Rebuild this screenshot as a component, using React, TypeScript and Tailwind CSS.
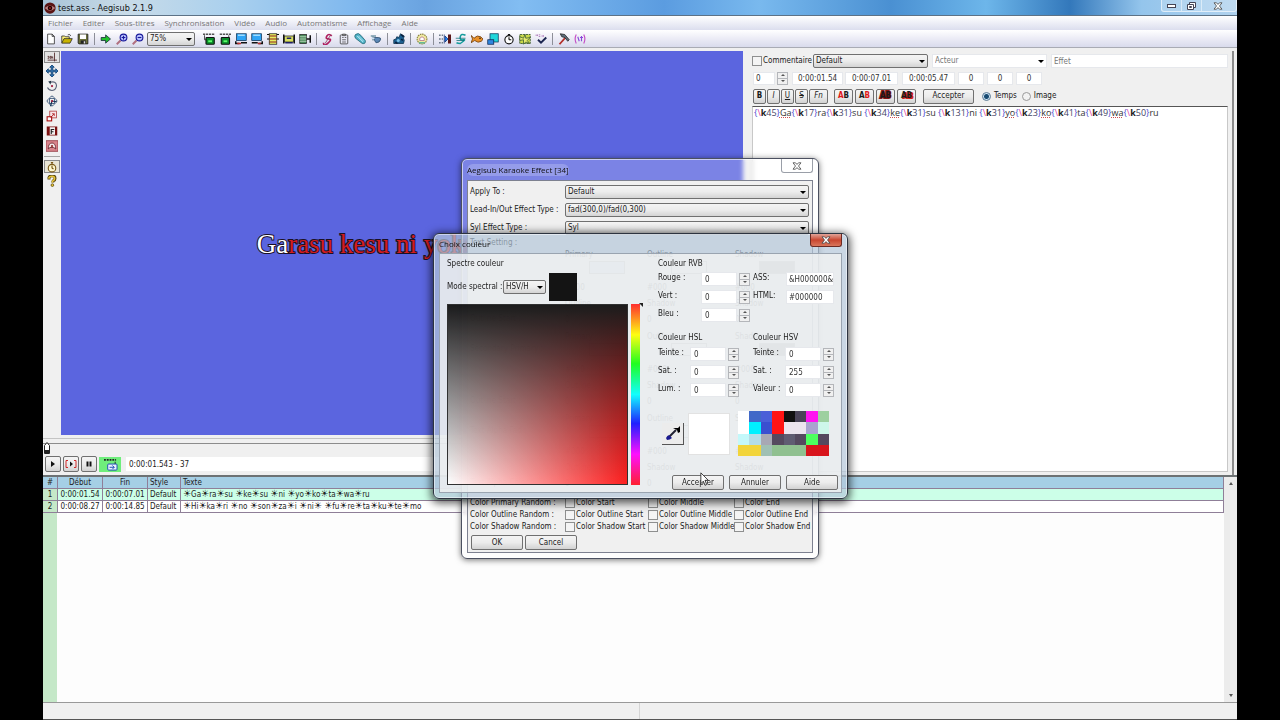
import { ReactNode } from "react";

const ui = "font-['DejaVu_Sans_Condensed','Liberation_Sans',sans-serif]";

// 16x16 toolbar drawings
const glyphs: Record<string, ReactNode> = {
  new: <path d="M3.500 1.500h6l3 3v10h-9zM9.500 1.500v3h3" fill="#fff" stroke="#222" />,
  open: (
    <>
      <path d="M1 13V4h4l1 1h5v3" fill="#fff27a" stroke="#222" />
      <path d="M1 13.500 4 7.500h11l-3 6z" fill="#c9b400" stroke="#222" />
      <path d="M9 2.500q3-2 4 1.500" fill="none" stroke="#222" />
    </>
  ),
  save: (
    <>
      <path d="M1.500 1.500h13v13h-12l-1-1z" fill="#6b6f3a" stroke="#111" />
      <path d="M4 2h8v6H4z" fill="#fff" />
      <path d="M5 10h7v4H5z" fill="#222" />
      <path d="M9 11h2v3H9z" fill="#ddd" />
    </>
  ),
  jump: <path d="M1.500 6h6V2.500L14 8l-6.500 5.500V10h-6z" fill="#1fc02a" stroke="#123" />,
  zoomIn: (
    <>
      <path d="M1 15 6 10" stroke="#b07080" strokeWidth="2.500" />
      <circle cx="10" cy="6" r="4.500" fill="#b9c2ff" stroke="#1a1a9a" strokeWidth="1.500" />
      <path d="M7.500 6h5M10 3.500v5" stroke="#1a1a9a" strokeWidth="1.500" />
    </>
  ),
  zoomOut: (
    <>
      <path d="M1 15 6 10" stroke="#b07080" strokeWidth="2.500" />
      <circle cx="10" cy="6" r="4.500" fill="#b9c2ff" stroke="#1a1a9a" strokeWidth="1.500" />
      <path d="M7.500 6h5" stroke="#1a1a9a" strokeWidth="1.500" />
    </>
  ),
  subStart: (
    <>
      <path d="M0 1.500h15" stroke="#555" strokeWidth="2" strokeDasharray="3 1" />
      <path d="M2 3v6h3" fill="none" stroke="#222" />
      <rect x="4" y="6" width="11" height="9" rx="1" fill="#0a8a2a" stroke="#111" strokeWidth="1.500" />
      <path d="M7 11h5" stroke="#5cff6a" strokeWidth="2.500" />
    </>
  ),
  subEnd: (
    <>
      <path d="M1 1.500h15" stroke="#555" strokeWidth="2" strokeDasharray="3 1" />
      <path d="M13 3v4" stroke="#222" />
      <rect x="3" y="6" width="11" height="9" rx="1" fill="#0a8a2a" stroke="#111" strokeWidth="1.500" />
      <path d="M6 11h5" stroke="#5cff6a" strokeWidth="2.500" />
    </>
  ),
  videoStart: (
    <>
      <rect x="2" y="1" width="13" height="9" fill="#2fa4f5" stroke="#135" />
      <path d="M4 3h9" stroke="#9fdcff" strokeWidth="2" />
      <path d="M1 11v3h5M8 13h8" fill="none" stroke="#111" strokeWidth="2" />
      <path d="M3 14h5" stroke="#c03030" strokeWidth="2" />
    </>
  ),
  videoEnd: (
    <>
      <rect x="1" y="1" width="13" height="9" fill="#2fa4f5" stroke="#135" />
      <path d="M3 3h9" stroke="#9fdcff" strokeWidth="2" />
      <path d="M1 13h8M15 11v3h-5" fill="none" stroke="#111" strokeWidth="2" />
      <path d="M9 14h4" stroke="#c03030" strokeWidth="2" />
    </>
  ),
  snap: (
    <>
      <path d="M0 2h16M0 8h16" stroke="#111" strokeWidth="1.500" />
      <rect x="3" y="1" width="10" height="14" fill="#e8ef60" stroke="#222" />
      <path d="M3 4h10M3 8h10M3 12h10" stroke="#8a2020" strokeWidth="1.500" />
    </>
  ),
  scene: (
    <>
      <path d="M1 2v12M15 2v12" stroke="#111" strokeWidth="2" />
      <rect x="2" y="4" width="12" height="8" fill="#d8e060" stroke="#222" />
      <path d="M3 13h10M5 7h6" stroke="#226" strokeWidth="2" />
    </>
  ),
  shift: (
    <>
      <rect x="1" y="2" width="9" height="12" fill="#4a8a5a" stroke="#222" />
      <path d="M1 5h9M1 8h9M1 11h9" stroke="#d0e8d0" />
      <path d="M15 3v10M15 8h-5" stroke="#111" strokeWidth="2" />
    </>
  ),
  styles: (
    <>
      <path d="M13 4Q9 0 6.500 4T9 8t-1 5.500-6-.5" fill="none" stroke="#b02060" strokeWidth="2.200" />
      <path d="M12 2 4 14" stroke="#803050" />
    </>
  ),
  props: (
    <>
      <rect x="3" y="2.500" width="10" height="12" rx="1" fill="#e8e8f4" stroke="#333" />
      <path d="M6 1.500h4v2H6zM5.500 6h2M9 6h2M5.500 9h5M5.500 12h5" fill="none" stroke="#444" />
    </>
  ),
  attach: (
    <>
      <path d="M2 2q4-3 7 1l6 7q1 5-4 4L2 7q-2-3 0-5z" fill="#53b3c8" stroke="#18606f" />
      <path d="M4 4l8 8M6 4l7 7" stroke="#bdeefa" />
    </>
  ),
  fonts: (
    <>
      <path d="M1 4h7M4 4v6" stroke="#79a" strokeWidth="2" />
      <path d="M5 6h6q4 0 3 3-1 4-6 4-2-2-3-7z" fill="#5b87b5" stroke="#246" />
      <path d="M2 7h4" stroke="#cde" strokeWidth="2" />
    </>
  ),
  auto: (
    <>
      <path d="M1 14V9l3-1 1-3 3 1 2-5 3 2 2 1-1 3 1 3-1 4z" fill="#1c5f8f" stroke="#082c48" />
      <circle cx="7" cy="10" r="2" fill="#7cc4ea" />
      <path d="M11 2l3 3M3 12l3 2M11 8l2 2" stroke="#0a1c3a" strokeWidth="2" />
    </>
  ),
  assdraw: (
    <>
      <circle cx="8" cy="8" r="6.500" fill="#efe9a0" stroke="#8d8440" strokeDasharray="2 1" strokeWidth="1.500" />
      <path d="M5 10h6V7L8 5 5 7z" fill="#fff" stroke="#b06a8a" />
      <path d="M4 13h8" stroke="#6b9" strokeWidth="2" />
    </>
  ),
  timing: (
    <>
      <path d="M0 3h6M0 8h6M0 13h6" stroke="#456" strokeDasharray="1 1" strokeWidth="2" />
      <path d="M7 2v12M8 4l4 4-4 4z" fill="#28f" stroke="#137" />
      <rect x="12" y="2" width="4" height="12" fill="#5a1818" />
    </>
  ),
  kanji: (
    <>
      <path d="M14 3Q8 0 7 5t4 4-4 5q-3 0-5-1" fill="none" stroke="#159c9c" strokeWidth="2" />
      <path d="M1 7h13M2 10h10" stroke="#0c6d74" />
    </>
  ),
  fish: (
    <>
      <path d="M0 3l4 4q4-5 9-2l3 3-2 3q-5 3-9-1l-5 3 2-5z" fill="#e8902a" stroke="#6b3a08" />
      <circle cx="12" cy="7" r="1" fill="#111" />
    </>
  ),
  resample: (
    <>
      <rect x="4" y="1" width="11" height="11" fill="#1fd6da" stroke="#0b3a5a" />
      <rect x="1" y="9" width="8" height="6" fill="#2f86e0" stroke="#0b2550" />
    </>
  ),
  clock: (
    <>
      <circle cx="8" cy="9" r="5.500" fill="#fff" stroke="#111" strokeWidth="1.500" />
      <path d="M8 9V5.500M8 9h3M6.500 2h3" stroke="#111" strokeWidth="1.500" />
    </>
  ),
  karaoke: (
    <>
      <path d="M1 2h14v12H1z" fill="#c9d94a" stroke="#242" strokeDasharray="3 1" />
      <path d="M1 5l5 2 2-5 1 5 6-1-4 4 3 4-5-2-3 3V9L1 10z" fill="#e8ec70" stroke="#353" />
    </>
  ),
  spell: (
    <>
      <path d="M1 3h3M6 2v4M9 4h3" stroke="#a05fae" strokeWidth="2" strokeDasharray="1 1" />
      <path d="M4 9l4 4 7-7" fill="none" stroke="#1b2550" strokeWidth="2.500" />
    </>
  ),
  options: (
    <>
      <path d="M2 15 10 6" stroke="#b3302a" strokeWidth="2.500" />
      <path d="M3 1l6 1 6 7-2 2-4-5-4-1z" fill="#5e6f7a" stroke="#222" />
    </>
  ),
  tagHide: (
    <>
      <path d="M3 2Q0 8 3 14M13 2q3 6 0 12" fill="none" stroke="#c44ac4" strokeWidth="1.500" />
      <path d="M5 5l2 6M10 4v7M8 6h4" stroke="#8a4ad8" strokeWidth="1.500" />
    </>
  ),
  // visual typesetting tools
  standard: <path d="M1 7h2v3H1M5 7h2v3H5zM9 7v3h1M1 13h15M12 1v14" fill="none" stroke="#4a2020" strokeWidth="1.300" />,
  drag: (
    <path
      d="M8 0l3 3H9v4h4V5l3 3-3 3V9H9v4h2l-3 3-3-3h2V9H3v2L0 8l3-3v2h4V3H5z"
      fill="#2d72b0"
      stroke="#174a7a"
      strokeWidth="1.200"
    />
  ),
  rotateZ: (
    <>
      <path d="M6 3q7-2 8 4 0 6-6 7-4 0-6-4" fill="none" stroke="#5b6478" strokeWidth="1.500" />
      <path d="M3 2l4-1-1 5z" fill="#234" />
      <circle cx="8" cy="8" r="1.500" fill="#a02040" />
    </>
  ),
  rotateXY: (
    <>
      <ellipse cx="8" cy="8" rx="6.500" ry="3.500" fill="none" stroke="#4a6484" strokeWidth="1.300" />
      <ellipse cx="8" cy="8" rx="3.500" ry="6.500" fill="none" stroke="#4a6484" strokeWidth="1.300" />
      <path d="M8 8l6 1M8 8l-2 7" stroke="#135" strokeWidth="1.500" />
      <circle cx="8" cy="8" r="1.500" fill="#a02040" />
    </>
  ),
  scale: (
    <>
      <rect x="5" y="1.500" width="9" height="9" fill="#f7e3e6" stroke="#a33" />
      <rect x="1.500" y="9" width="6" height="5.500" fill="#fff" stroke="#a11" strokeWidth="1.500" />
      <path d="M6 10l5-5M8 5h3v3" fill="none" stroke="#a11" />
    </>
  ),
  clip: (
    <>
      <rect x="1" y="2" width="14" height="12" fill="#7a1010" />
      <rect x="5" y="3" width="7" height="10" fill="#f2f2f2" />
      <path d="M7 12V6h4M7 9h3" fill="none" stroke="#222" strokeWidth="1.500" />
    </>
  ),
  vectorClip: (
    <>
      <rect x="0" y="1" width="16" height="14" fill="#d8848c" stroke="#8a2a34" />
      <path d="M3 12q0-8 5-8t5 8q-3-3-5-2-3-1-5 2z" fill="#f3e6e8" stroke="#5c1a22" />
      <circle cx="8" cy="8" r="1.500" fill="#933" />
    </>
  ),
  realtime: (
    <>
      <circle cx="8" cy="9.500" r="5" fill="#fdf8d0" stroke="#7a5a18" strokeWidth="1.500" />
      <path d="M8 9.500V6M8 9.500l2 1M6.500 2h3M8 2v2" stroke="#7a5a18" strokeWidth="1.500" />
    </>
  ),
  help: (
    <>
      <path d="M4 6V3.500Q5 1 8 1q4 0 4 3.500 0 2-2 3-1 .8-1 2.500" fill="none" stroke="#5a4a10" strokeWidth="4" />
      <path d="M4 5V3.500Q5 1.500 8 1.500q3.500 0 3.500 3 0 2-2 3-1 .8-1 2.500" fill="none" stroke="#e8c53a" strokeWidth="2" />
      <circle cx="8.500" cy="13.500" r="1.800" fill="#e8c53a" stroke="#5a4a10" />
    </>
  ),
};

function Glyph({ name, className = "size-3" }: { name: string; className?: string }) {
  return (
    <svg viewBox="0 0 16 16" className={className} fill="none" aria-hidden="true">
      {glyphs[name]}
    </svg>
  );
}

function ToolButton({ name }: { name: string }) {
  return (
    <button aria-label={name} className="flex h-4 w-4 items-center justify-center">
      <Glyph name={name} />
    </button>
  );
}

function Separator() {
  return <span className="mx-[3px] h-3 w-px bg-[#8d8f98]" />;
}

const btn =
  "flex items-center justify-center rounded-[2px] border border-[#707070] bg-gradient-to-b from-[#f4f4f4] via-[#ececec] to-[#d2d2d2]";
const field = "min-w-0 border border-[#e6e8ec] bg-white text-[#333] outline-none";

function Drop({ label, options, className = "", plain = false }: {
  label: string;
  options: string[];
  className?: string;
  plain?: boolean;
}) {
  return (
    <span className={`relative flex h-[14px] ${className}`}>
      <select
        aria-label={label}
        className={`w-full appearance-none pl-[2px] outline-none ${
          plain
            ? "border border-[#e6e8ec] bg-white text-[#777]"
            : "rounded-[2px] border border-[#707070] bg-gradient-to-b from-[#f4f4f4] via-[#ececec] to-[#d4d4d4]"
        }`}
      >
        {options.map((o) => (
          <option key={o}>{o}</option>
        ))}
      </select>
      <svg viewBox="0 0 6 3" className="pointer-events-none absolute right-[3px] top-[6px] h-[3px] w-[6px]">
        <path d="M0 0h6L3 3z" fill="#000" />
      </svg>
    </span>
  );
}

function Spinner({ label }: { label: string }) {
  return (
    <span className="flex h-[13px] w-[11px] flex-col">
      <button aria-label={`${label} +`} className="flex flex-1 items-center justify-center border border-[#b4b6ba] bg-[#f0f0f0]">
        <svg viewBox="0 0 4 2" className="h-[2px] w-1"><path d="M0 2h4L2 0z" fill="#555" /></svg>
      </button>
      <button aria-label={`${label} -`} className="flex flex-1 items-center justify-center border border-t-0 border-[#b4b6ba] bg-[#f0f0f0]">
        <svg viewBox="0 0 4 2" className="h-[2px] w-1"><path d="M0 0h4L2 2z" fill="#555" /></svg>
      </button>
    </span>
  );
}

function Check({ label }: { label: string }) {
  return (
    <label className="flex items-center gap-px whitespace-nowrap">
      <input type="checkbox" className="size-[10px] shrink-0 appearance-none border border-[#8e8f8f] bg-[#f4f4f4]" />
      {label}
    </label>
  );
}

function CloseMark() {
  return (
    <svg viewBox="0 0 10 8" className="h-2 w-[10px]" aria-hidden="true">
      <path d="M1 .8h2.500L5 2.400 6.500 .8H9L6.500 4 9 7.200H6.500L5 5.600 3.500 7.200H1L3.500 4z" fill="#fff" stroke="#444" strokeWidth=".8" />
    </svg>
  );
}

const menus = ["Fichier", "Editer", "Sous-titres", "Synchronisation", "Vidéo", "Audio", "Automatisme", "Affichage", "Aide"];

function TitleBar() {
  return (
    <header className="flex h-4 items-center border-b border-[#5d7286] bg-[linear-gradient(90deg,#a9c4d8_0%,#c8dbe8_7%,#a9d0ee_16%,#7fb8ee_26%,#6aa3e0_32%,#82bdf2_40%,#5b9ce0_52%,#79b9ee_60%,#4a90d2_71%,#6db6ea_79%,#3378bb_86%,#94c5ec_92%,#b0d2ee_100%)] pl-px">
      <svg viewBox="0 0 16 16" className="size-3" aria-hidden="true">
        <circle cx="8" cy="8" r="7.500" fill="#5a1414" />
        <path d="M1 8q7-7 14 0-7 7-14 0z" fill="#b98080" />
        <circle cx="8" cy="8" r="3" fill="#200" />
        <circle cx="8" cy="8" r="1" fill="#f33" />
      </svg>
      <h1 className="ml-[2px] text-[9px] text-[#111]">test.ass - Aegisub 2.1.9</h1>
      <div className="ml-auto flex h-3 self-start rounded-b-[3px] border border-t-0 border-white/60 bg-white/20">
        <button aria-label="Réduire" className="flex w-5 items-center justify-center border-r border-white/50">
          <svg viewBox="0 0 9 4" className="h-1 w-[9px]"><rect x=".5" y=".5" width="8" height="3" fill="#fff" stroke="#445" /></svg>
        </button>
        <button aria-label="Restaurer" className="flex w-5 items-center justify-center border-r border-white/50">
          <svg viewBox="0 0 9 8" className="h-2 w-[9px]" fill="#fff" stroke="#445">
            <path d="M2.500 .5h6v5h-6z" /><path d="M.5 2.500h6v5h-6zM2.500 4.500h2v1h-2z" />
          </svg>
        </button>
        <button aria-label="Fermer" className="mr-[2px] flex w-8 items-center justify-center"><CloseMark /></button>
      </div>
    </header>
  );
}

const toolbarGroups = [
  ["subStart", "subEnd", "videoStart", "videoEnd", "snap", "scene", "shift"],
  ["styles", "props", "attach", "fonts"],
  ["auto"],
  ["assdraw"],
  ["timing", "kanji", "fish", "resample", "clock", "karaoke", "spell"],
  ["options", "tagHide"],
];

function Toolbar() {
  return (
    <div className="flex h-[18px] items-center border-b border-[#a9abb4] bg-gradient-to-b from-white via-[#ececf6] to-[#d9dbec]">
      {["new", "open", "save"].map((n) => <ToolButton key={n} name={n} />)}
      <Separator />
      {["jump", "zoomIn", "zoomOut"].map((n) => <ToolButton key={n} name={n} />)}
      <Drop label="Zoom" options={["75%"]} className="ml-px mr-[6px] w-[48px]" />
      {toolbarGroups.map((group, i) => (
        <div key={i} className="flex items-center">
          {i > 0 && <Separator />}
          {group.map((n) => <ToolButton key={n} name={n} />)}
        </div>
      ))}
    </div>
  );
}

function SideTools() {
  return (
    <div className="flex w-[18px] shrink-0 flex-col items-center bg-[#f0f0f0]">
      <button aria-label="standard" className="flex h-3 w-4 items-center justify-center border border-[#8a8a8a] bg-[#e2e2e2]">
        <Glyph name="standard" className="h-[10px] w-3" />
      </button>
      <div className="flex flex-col">
        {["drag", "rotateZ", "rotateXY", "scale", "clip", "vectorClip"].map((n) => (
          <button key={n} aria-label={n} className="flex h-[15px] w-4 items-center justify-center"><Glyph name={n} /></button>
        ))}
      </div>
      <span className="my-[3px] h-px w-4 bg-[#a5a5a5]" />
      <button aria-label="realtime" className="flex h-[13px] w-4 items-center justify-center border border-[#8a8a8a] bg-[#e9e6d6]">
        <Glyph name="realtime" />
      </button>
      <button aria-label="help" className="flex h-[15px] w-4 items-center justify-center"><Glyph name="help" /></button>
    </div>
  );
}

function VideoPanel() {
  return (
    <section className="flex w-[700px] shrink-0 flex-col">
      <div className="flex h-[384px]">
        <SideTools />
        <div className="flex flex-1 items-center justify-center overflow-hidden bg-[#5b65df]">
          <p className="whitespace-nowrap pl-1 pt-[2px] font-['Liberation_Serif',serif] text-[27px] text-[#d31c20] [-webkit-text-stroke:2px_#1a1024] [paint-order:stroke]">
            <span className="text-white">Ga</span>rasu kesu ni yokotawaru
          </p>
        </div>
      </div>
      <div className="mt-[3px] flex h-[17px] flex-col">
        <div className="h-px bg-[#c4c4c4]" />
        <div className="relative mt-1 h-px bg-[#8c8c8c]">
          <svg viewBox="0 0 6 12" className="absolute -top-px left-[1px] h-3 w-[6px]">
            <path d="M.5 3.500 3 .5l2.500 3v8h-5z" fill="#fff" stroke="#222" />
            <path d="M1 8h4v3H1z" fill="#222" />
          </svg>
        </div>
      </div>
      <div className="flex h-[18px] items-center gap-[2px] pl-[2px]">
        <button aria-label="Lecture" className={`${btn} size-4`}>
          <svg viewBox="0 0 8 8" className="size-2"><path d="M2 1l4 3-4 3z" fill="#111" /></svg>
        </button>
        <button aria-label="Lire la ligne" className={`${btn} size-4`}>
          <svg viewBox="0 0 12 8" className="h-2 w-3" fill="none" stroke="#d02828"><path d="M3 .5H1v7h2M9 .5h2v7H9" /><path d="M5 1.500 8 4 5 6.500z" fill="#111" stroke="none" /></svg>
        </button>
        <button aria-label="Pause" className={`${btn} size-4`}>
          <svg viewBox="0 0 8 8" className="size-2"><path d="M1.500 1.500h2v5h-2zM4.500 1.500h2v5h-2z" fill="#111" /></svg>
        </button>
        <button aria-label="Défilement automatique" className="flex h-[15px] w-[22px] items-center justify-center bg-[#6fee7c]">
          <svg viewBox="0 0 16 14" className="h-[13px] w-[15px]" fill="none">
            <path d="M1 2h13" stroke="#222" strokeWidth="2" strokeDasharray="2 1" />
            <path d="M13 4v3" stroke="#222" />
            <rect x="5" y="6.500" width="10" height="6.500" rx="1" fill="#e8f2ff" stroke="#1845b0" />
            <path d="M7 10h5M10 8l2 2-2 2" stroke="#1845b0" />
          </svg>
        </button>
        <input aria-label="Position vidéo" defaultValue="0:00:01.543 - 37" className="ml-[3px] h-[14px] flex-1 bg-white pl-[3px] text-[#222] outline-none" />
      </div>
    </section>
  );
}

// karaoke syllables: [duration, text, unknown word]
const syllables: [number, string, boolean][] = [
  [45, "Ga", true], [17, "ra", false], [31, "su ", false], [34, "ke", true], [31, "su ", false], [131, "ni ", false],
  [31, "yo", true], [23, "ko", true], [41, "ta", false], [49, "wa", true], [50, "ru", false],
];

function EditPanel() {
  return (
    <section className="mr-[3px] flex min-w-0 flex-1 flex-col border-r-2 border-[#8b8b8b] bg-[#f0f0f0] pb-[3px] pl-[9px] pr-1 pt-[3px]">
      <div className="flex h-[14px] items-center">
        <div className="w-[61px]"><Check label="Commentaire" /></div>
        <Drop label="Style" options={["Default"]} className="w-[115px]" />
        <Drop label="Acteur" options={["Acteur"]} plain className="ml-1 w-[115px]" />
        <input aria-label="Effet" placeholder="Effet" className={`${field} ml-1 h-[14px] flex-1 pl-[2px] placeholder:text-[#777]`} />
      </div>
      <div className="mt-[3px] flex h-[14px] items-center">
        <input aria-label="Calque" defaultValue="0" className={`${field} ml-px mr-[2px] h-[13px] w-[22px] pl-[2px]`} />
        <Spinner label="Calque" />
        <input aria-label="Début" defaultValue="0:00:01.54" className={`${field} ml-1 h-[13px] w-[51px] text-center`} />
        <input aria-label="Fin" defaultValue="0:00:07.01" className={`${field} ml-[2px] h-[13px] w-[53px] text-center`} />
        <input aria-label="Durée" defaultValue="0:00:05.47" className={`${field} ml-1 h-[13px] w-[53px] text-center`} />
        {["Marge gauche", "Marge droite", "Marge verticale"].map((m) => (
          <input key={m} aria-label={m} defaultValue="0" className={`${field} ml-[3px] h-[13px] w-[26px] text-center`} />
        ))}
      </div>
      <div className="mt-[3px] flex h-4 items-center pl-px">
        <div className="flex gap-px">
          <button className={`${btn} h-[15px] w-[13px] font-bold`}>B</button>
          <button className={`${btn} h-[15px] w-[13px] italic`}>I</button>
          <button className={`${btn} h-[15px] w-[13px] underline`}>U</button>
          <button className={`${btn} h-[15px] w-[13px] line-through`}>S</button>
          <button className={`${btn} h-[15px] w-[19px] italic`}>Fn</button>
        </div>
        <div className="ml-[6px] flex gap-[2px] font-bold">
          <button className={`${btn} h-[15px] w-[19px]`}><span className="text-[#e01818]">A</span>B</button>
          <button className={`${btn} h-[15px] w-[19px]`}>A<span className="text-[#e01818]">B</span></button>
          <button className={`${btn} h-[15px] w-[19px] [-webkit-text-stroke:2px_#8a1414] [paint-order:stroke]`}>AB</button>
          <button className={`${btn} h-[15px] w-[19px] [text-shadow:1px_1px_0_#d01818,2px_1px_0_#d01818]`}>AB</button>
        </div>
        <button className={`${btn} ml-[7px] h-[15px] w-[51px]`}>Accepter</button>
        <label className="ml-2 flex items-center gap-[3px]">
          <input type="radio" name="unit" defaultChecked className="size-[9px] appearance-none rounded-full border border-[#5b7a96] bg-[radial-gradient(circle,#174a72_0_2px,#cfe4f2_3px)]" />
          Temps
        </label>
        <label className="ml-[5px] flex items-center gap-[3px]">
          <input type="radio" name="unit" className="size-[9px] appearance-none rounded-full border border-[#9a9a9a] bg-[#f2f2f2]" />
          Image
        </label>
      </div>
      <div
        role="textbox"
        aria-label="Texte"
        contentEditable
        suppressContentEditableWarning
        spellCheck={false}
        className="mt-[2px] flex-1 whitespace-pre-wrap border border-[#c8c8c8] border-t-[#555] bg-white pl-px font-['Open_Sans','Noto_Sans',sans-serif] text-[9px] text-[#333] outline-none"
      >
        {syllables.map(([k, text, unknown], i) => (
          <span key={i}>
            <span className="text-[#4a4ad0]">{"{"}</span>
            <span className="text-[#e03ca8]">\</span>
            <b className="text-[#222]">k</b>
            <span className="text-[#444466]">{k}</span>
            <span className="text-[#4a4ad0]">{"}"}</span>
            <span className={unknown ? "underline decoration-[#d05050] decoration-dotted" : ""}>{text}</span>
          </span>
        ))}
      </div>
    </section>
  );
}

const lines = [
  { start: "0:00:01.54", end: "0:00:07.01", style: "Default", text: "☀Ga☀ra☀su ☀ke☀su ☀ni ☀yo☀ko☀ta☀wa☀ru", row: "bg-[#ccffe8]" },
  { start: "0:00:08.27", end: "0:00:14.85", style: "Default", text: "☀Hi☀ka☀ri ☀no ☀son☀za☀i ☀ni☀ ☀fu☀re☀ta☀ku☀te☀mo", row: "bg-white" },
];

// override blocks are collapsed to a sun sign
function Collapsed({ text }: { text: string }) {
  return text.split(/(☀)/).map((part, i) =>
    part === "☀" ? <span key={i} className="text-[10px]">☀</span> : part
  );
}

function SubtitleGrid() {
  const cell = "h-3 border-b border-r border-[#8f7f98] p-0";
  return (
    <section className="flex flex-1 border-t-2 border-[#6d7274] bg-[#fdfdfd]">
      <div className="flex min-w-0 flex-1 flex-col bg-[linear-gradient(90deg,#c5e8c8_14px,transparent_14px)]">
        <table className="w-full table-fixed border-separate border-spacing-0 leading-[10px] text-[#222]">
          <colgroup>
            <col className="w-[15px]" />
            <col className="w-[45px]" />
            <col className="w-[45px]" />
            <col className="w-[33px]" />
            <col />
          </colgroup>
          <thead>
            <tr className="bg-[#a5cfe5]">
              <th className={`${cell} font-normal`}>#</th>
              <th className={`${cell} font-normal`}>Début</th>
              <th className={`${cell} font-normal`}>Fin</th>
              <th className={`${cell} pl-[2px] text-left font-normal`}>Style</th>
              <th className={`${cell} pl-[2px] text-left font-normal`}>Texte</th>
            </tr>
          </thead>
          <tbody>
            {lines.map((l, i) => (
              <tr key={l.start} className={l.row}>
                <td className={`${cell} bg-[#c5e8c8] text-center`}>{i + 1}</td>
                <td className={`${cell} text-center`}>{l.start}</td>
                <td className={`${cell} text-center`}>{l.end}</td>
                <td className={`${cell} pl-[2px]`}>{l.style}</td>
                <td className={`${cell} whitespace-nowrap pl-[2px]`}><Collapsed text={l.text} /></td>
              </tr>
            ))}
          </tbody>
        </table>
      </div>
      <div className="flex w-[13px] flex-col items-center justify-between bg-[#ececec] py-[5px]">
        <svg viewBox="0 0 4 3" className="h-[3px] w-1"><path d="M0 3h4L2 0z" fill="#555" /></svg>
        <svg viewBox="0 0 4 3" className="h-[3px] w-1"><path d="M0 0h4L2 3z" fill="#555" /></svg>
      </div>
    </section>
  );
}

const effectRows = [
  ["Apply To :", "Default"],
  ["Lead-In/Out Effect Type :", "fad(300,0)/fad(0,300)"],
  ["Syl Effect Type :", "Syl"],
];

const randomRows = [
  ["Color Primary Random :", "Color Start", "Color Middle", "Color End"],
  ["Color Outline Random :", "Color Outline Start", "Color Outline Middle", "Color Outline End"],
  ["Color Shadow Random :", "Color Shadow Start", "Color Shadow Middle", "Color Shadow End"],
];

const settingBlocks = [
  ["", "Outline Start :"],
  ["Secondary Primary :", "Outline Start :"],
  ["Text Alpha Fad :", "Text Alpha Color :"],
];

function KaraokeDialog() {
  return (
    <section
      role="dialog"
      aria-label="Aegisub Karaoke Effect"
      className="absolute left-[418px] top-[158px] flex w-[358px] flex-col rounded-[6px] border border-[#4b5060] bg-white/20 px-[5px] pb-[5px] shadow-[0_1px_6px_rgba(0,0,0,.55),inset_0_0_0_1px_rgba(255,255,255,.6)] backdrop-blur-[2px]"
    >
      <div className="flex h-[21px] items-center">
        <h2 className="rounded-full bg-white/20 font-['Open_Sans','Noto_Sans',sans-serif] text-[8px] text-[#111]">Aegisub Karaoke Effect [34]</h2>
        <button aria-label="Fermer" className="ml-auto flex h-[14px] w-8 items-center justify-center self-start rounded-b-[3px] border border-t-0 border-[#9a9fa8] bg-white/50">
          <CloseMark />
        </button>
      </div>
      <div className="flex flex-col border border-[#7d8190] bg-[#f0f0f0] pb-[2px] pl-[2px] pr-[3px] pt-1">
        <div className="flex flex-col gap-1">
          {effectRows.map(([label, value]) => (
            <div key={label} className="flex h-[14px] items-center">
              <span className="w-[95px] whitespace-nowrap">{label}</span>
              <Drop label={label} options={[value]} className="flex-1" />
            </div>
          ))}
        </div>
        <p className="mt-[2px] h-3">Text Setting :</p>
        {settingBlocks.map(([a, b], i) => (
          <div key={i} className="grid h-[82px] grid-cols-[95px_82px_88px_1fr] overflow-hidden">
            <div className="flex flex-col gap-[40px] pt-3"><span className="h-3">{a}</span><span className="h-3">{b}</span></div>
            {["Primary", "Outline", "Shadow"].map((c, j) => (
              <div key={c} className="flex flex-col">
                <span className="h-3">{c}</span>
                <button aria-label={`${c} ${i}`} className={`ml-6 h-[13px] w-9 border border-[#888] ${["bg-[#c8d2ff]", "bg-[#f0f0f0]", "bg-[#777]"][j]}`} />
                <span className="mt-2 h-3">#000</span>
                <span className="mt-1 h-3">{j === 0 ? "Outline" : "Shadow"}</span>
                <span className="mt-1 h-3">0</span>
              </div>
            ))}
          </div>
        ))}
        <div className="mt-[2px] grid grid-cols-[95px_83px_86px_1fr]">
          {randomRows.map(([title, ...boxes]) => (
            <div key={title} className="contents">
              <span className="flex h-3 items-center whitespace-nowrap">{title}</span>
              {boxes.map((b) => <Check key={b} label={b} />)}
            </div>
          ))}
        </div>
        <div className="mt-[2px] flex gap-[2px] pl-px">
          <button className={`${btn} h-[15px] w-[52px]`}>OK</button>
          <button className={`${btn} h-[15px] w-[52px]`}>Cancel</button>
        </div>
      </div>
    </section>
  );
}

function ColorField({ id, label, value, labelWidth, spin = true }: {
  id: string;
  label: string;
  value: string;
  labelWidth: string;
  spin?: boolean;
}) {
  return (
    <div className="flex h-[18px] items-center">
      <label className={`flex items-center pb-[2px] ${labelWidth}`} htmlFor={id}>{label}</label>
      <input id={id} defaultValue={value} className={`${field} h-[14px] ${spin ? "w-9 pl-[3px]" : "w-12 pl-[2px]"}`} />
      {spin && <span className="ml-[2px]"><Spinner label={label} /></span>}
    </div>
  );
}

const palette = [
  "#ffffff", "#4169c8", "#4a5fd8", "#ff1414", "#111111", "#4a4458", "#ff14f0", "#9dd0a0",
  "#ffffff", "#00f0ff", "#3a50d0", "#ff1414", "#ece4ee", "#ece4ee", "#a9a3cf", "#cdf7ea",
  "#c4f8fa", "#b4dde8", "#a8a8b4", "#55495f", "#605c72", "#55495f", "#4cff5e", "#55495f",
  "#f2d43a", "#f2d43a", "#a0c0b4", "#90c090", "#90c090", "#90c090", "#d8141c", "#d8141c",
];

function ColorDialog() {
  return (
    <section
      role="dialog"
      aria-label="Choix couleur"
      className="absolute left-[390px] top-[233px] flex w-[415px] flex-col rounded-[6px] border border-[#2d3440] bg-[#b4c6d8]/70 px-[5px] pb-[5px] shadow-[0_2px_9px_2px_rgba(0,0,0,.65),inset_0_0_0_1px_rgba(255,255,255,.5)]"
    >
      <div className="flex h-[19px] items-center">
        <h2 className="font-['Open_Sans','Noto_Sans',sans-serif] text-[8px] text-[#111]">Choix couleur</h2>
        <button aria-label="Fermer" className="ml-auto flex h-[13px] w-8 items-center justify-center self-start rounded-b-[3px] border border-t-0 border-[#6d2a22] bg-gradient-to-b from-[#e0a398] via-[#c8452f] to-[#d9765c]">
          <CloseMark />
        </button>
      </div>
      <div className="flex border border-[#9aa4b0] bg-[#f3f3f3]/80 pb-[2px] pl-[7px] pt-1">
        <div className="flex w-[211px] flex-col pb-[5px]">
          <h3 className="h-3">Spectre couleur</h3>
          <div className="mt-[3px] flex h-7 items-center">
            <span className="w-14 whitespace-nowrap">Mode spectral :</span>
            <Drop label="Mode spectral" options={["HSV/H"]} className="mr-[3px] w-[43px]" />
            <span className="size-7 bg-[#141414]" />
          </div>
          <div className="mt-[3px] flex gap-[3px] opacity-93">
            <div className="size-[181px] border border-[#222] bg-[linear-gradient(#0c0c0c,transparent),linear-gradient(90deg,#ffffff,#ff1010)]" />
            <div className="relative w-[9px] bg-[linear-gradient(#ff2020,#ffff00_17%,#10ff10_33%,#00ffff_50%,#1010ff_66%,#ff00ff_83%,#ff1020)]">
              <svg viewBox="0 0 4 4" className="absolute -right-[3px] -top-px size-1"><path d="M4 0v4L0 0z" fill="#111" /></svg>
            </div>
          </div>
        </div>
        <div className="flex flex-1 flex-col">
          <h3 className="h-3">Couleur RVB</h3>
          <div className="flex">
            <div className="w-[95px]">
              {["Rouge :", "Vert :", "Bleu :"].map((l) => <ColorField key={l} id={`rvb-${l[0]}`} label={l} value="0" labelWidth="w-[43px]" />)}
            </div>
            <div>
              <ColorField id="ass" label="ASS:" value="&H000000&" labelWidth="w-[33px]" spin={false} />
              <ColorField id="html" label="HTML:" value="#000000" labelWidth="w-[33px]" spin={false} />
            </div>
          </div>
          <div className="mt-2 flex">
            <div className="w-[95px]">
              <h3 className="mb-px h-3">Couleur HSL</h3>
              {["Teinte :", "Sat. :", "Lum. :"].map((l) => <ColorField key={l} id={`hsl-${l[0]}`} label={l} value="0" labelWidth="w-8" />)}
            </div>
            <div>
              <h3 className="mb-px h-3">Couleur HSV</h3>
              <ColorField id="hsv-t" label="Teinte :" value="0" labelWidth="w-8" />
              <ColorField id="hsv-s" label="Sat. :" value="255" labelWidth="w-8" />
              <ColorField id="hsv-v" label="Valeur :" value="0" labelWidth="w-8" />
            </div>
          </div>
          <div className="mt-3 flex items-center">
            <button aria-label="Pipette" className="ml-1 flex size-[22px] items-center justify-center border-b border-r border-[#555] bg-[#ececec]">
              <svg viewBox="0 0 16 16" className="size-4" fill="none">
                <path d="M4 12 11 5" stroke="#223" strokeWidth="2" />
                <path d="M8 3h5l2-2v6l-2 1-1-3z" fill="#000" />
                <path d="M1 13q2-4 4-2l2 2q-2 2-5 2z" fill="#1a1a90" />
              </svg>
            </button>
            <div className="ml-1 h-[42px] w-[42px] border border-[#e2e2e2] bg-white" />
            <div className="ml-2 grid h-[45px] w-[91px] grid-cols-8 grid-rows-4">
              {palette.map((c, i) => <button key={i} aria-label={c} style={{ background: c }} />)}
            </div>
          </div>
          <div className="mt-auto flex gap-[5px] pl-[14px]">
            {["Accepter", "Annuler", "Aide"].map((l) => <button key={l} className={`${btn} h-[15px] w-[52px]`}>{l}</button>)}
          </div>
        </div>
      </div>
    </section>
  );
}

export default function App() {
  return (
    <div className={`${ui} flex min-h-screen bg-black px-[43px] text-[8px] leading-[12px] text-[#1a1a1a]`}>
      <main className="relative flex min-w-0 flex-1 flex-col bg-[#f0f0f0]">
        <TitleBar />
        <nav className="flex h-[14px] items-center gap-[10px] bg-gradient-to-b from-white to-[#dcdeee] pl-[5px] font-['Open_Sans','Noto_Sans',sans-serif] text-[#777]">
          {menus.map((m) => <button key={m}>{m}</button>)}
        </nav>
        <Toolbar />
        <div className="flex h-[427px] pt-[3px]">
          <VideoPanel />
          <EditPanel />
        </div>
        <SubtitleGrid />
        <footer className="flex h-[18px] border-b border-t border-b-[#555] border-t-[#999]">
          <span className="w-1/2 border-r border-[#d5d5d5]" />
        </footer>
        <KaraokeDialog />
        <ColorDialog />
        <svg viewBox="0 0 12 18" className="pointer-events-none absolute left-[657px] top-[472px] h-[15px] w-[10px]">
          <path d="M1 1v13l3-3 2 5 2-1-2-5h4z" fill="#fff" stroke="#222" />
        </svg>
      </main>
    </div>
  );
}
